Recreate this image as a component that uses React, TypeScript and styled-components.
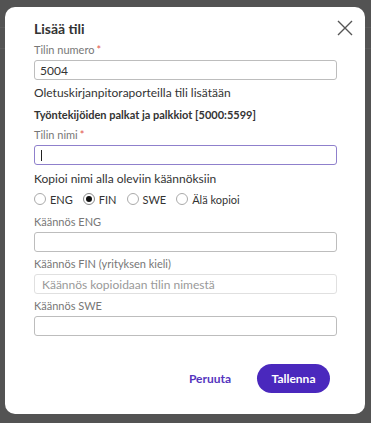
import React from 'react';
import styled, { createGlobalStyle } from 'styled-components';

const GlobalStyle = createGlobalStyle`
  html, body {
    margin: 0;
    padding: 0;
    background: #535353;
    font-family: Lato, "Noto Sans", sans-serif;
  }
`;

const Backdrop = styled.div`
  position: relative;
  width: 371px;
  height: 423px;
  overflow: hidden;
  background: #535353;
`;

const BackRow = styled.div<{ $h: number }>`
  height: ${(p) => p.$h}px;
  border-bottom: 1px solid #5b5b5b;
`;

const Modal = styled.div`
  position: absolute;
  left: 5px;
  top: 7px;
  width: 360px;
  height: 407px;
  box-sizing: border-box;
  background: #fff;
  border-radius: 10px;
  padding: 11px 28px 0 29px;
  display: flex;
  flex-direction: column;
`;

const Header = styled.div`
  display: flex;
  align-items: flex-start;
  justify-content: space-between;
  height: 22px;
`;

const Title = styled.h2`
  margin: 0;
  font-size: 14px;
  line-height: 22px;
  font-weight: 700;
  color: #333;
`;

const CloseButton = styled.button`
  border: 0;
  background: none;
  padding: 0;
  margin-right: -16px;
  margin-top: 2px;
  cursor: pointer;
  display: flex;
`;

const Label = styled.div<{ $top?: number }>`
  font-size: 11px;
  color: #777;
  margin-top: ${(p) => p.$top ?? 5}px;
  line-height: 14px;
`;

const Star = styled.span`
  color: #e2574c;
  margin-left: 2px;
`;

const Field = styled.div`
  position: relative;
  margin-top: 3px;
`;

const Input = styled.input<{ $focused?: boolean }>`
  display: block;
  box-sizing: border-box;
  width: 100%;
  height: 20px;
  padding: 0 5px;
  border: 1px solid ${(p) => (p.$focused ? '#8f80cc' : '#bdbdbd')};
  border-radius: 3px;
  font-family: inherit;
  font-size: 12px;
  color: #333;
  outline: none;
  background: #fff;
  caret-color: transparent;

  &:disabled {
    border-color: #e0e0e0;
    padding-left: 7px;
  }

  &::placeholder {
    color: #999;
  }
`;

const Caret = styled.span`
  position: absolute;
  left: 7px;
  top: 5px;
  width: 1px;
  height: 11px;
  background: #222;
`;

const Text = styled.div<{ $bold?: boolean; $top: number }>`
  font-size: ${(p) => (p.$bold ? 11 : 12)}px;
  line-height: 14px;
  color: #333;
  font-weight: ${(p) => (p.$bold ? 700 : 400)};
  margin-top: ${(p) => p.$top}px;
`;

const RadioRow = styled.div`
  display: flex;
  align-items: center;
  gap: 10px;
  margin-top: 6px;
  height: 14px;
`;

const RadioOption = styled.label`
  display: flex;
  align-items: center;
  gap: 4px;
  font-size: 11px;
  color: #333;
`;

const Circle = styled.span<{ $checked?: boolean }>`
  width: 12px;
  height: 12px;
  box-sizing: border-box;
  border-radius: 50%;
  border: 1px solid ${(p) => (p.$checked ? '#888' : '#aaa')};
  display: flex;
  align-items: center;
  justify-content: center;

  &::after {
    content: '';
    display: ${(p) => (p.$checked ? 'block' : 'none')};
    width: 6px;
    height: 6px;
    border-radius: 50%;
    background: #111;
  }
`;

const Footer = styled.div`
  margin-top: auto;
  margin-bottom: 21px;
  display: flex;
  justify-content: flex-end;
  align-items: center;
  gap: 26px;
  padding-right: 7px;
`;

const TextButton = styled.button`
  border: 0;
  background: none;
  font-family: inherit;
  font-size: 12px;
  font-weight: 700;
  color: #5535be;
  padding: 0;
  cursor: pointer;
`;

const PrimaryButton = styled.button`
  border: 0;
  border-radius: 15px;
  height: 29px;
  width: 73px;
  background: #4a28bd;
  color: #fff;
  font-family: inherit;
  font-size: 12px;
  font-weight: 700;
  cursor: pointer;
`;

const radios = [
  { label: 'ENG', checked: false },
  { label: 'FIN', checked: true },
  { label: 'SWE', checked: false },
  { label: 'Älä kopioi', checked: false },
];

export default function App() {
  return (
    <>
      <GlobalStyle />
      <Backdrop>
        <BackRow $h={27} />
        <BackRow $h={20} />
        <Modal>
          <Header>
            <Title>Lisää tili</Title>
            <CloseButton aria-label="Sulje">
              <svg width="16" height="16" viewBox="0 0 16 16">
                <path d="M1 1L15 15M15 1L1 15" stroke="#555" strokeWidth="1.4" fill="none" />
              </svg>
            </CloseButton>
          </Header>
          <Label $top={3}>
            Tilin numero<Star>*</Star>
          </Label>
          <Field>
            <Input defaultValue="5004" />
          </Field>
          <Text $top={6}>Oletuskirjanpitoraporteilla tili lisätään</Text>
          <Text $bold $top={8}>
            Työntekijöiden palkat ja palkkiot [5000:5599]
          </Text>
          <Label $top={6}>
            Tilin nimi<Star>*</Star>
          </Label>
          <Field>
            <Input $focused />
            <Caret />
          </Field>
          <Text $top={7}>Kopioi nimi alla oleviin käännöksiin</Text>
          <RadioRow>
            {radios.map((r) => (
              <RadioOption key={r.label}>
                <Circle $checked={r.checked} />
                {r.label}
              </RadioOption>
            ))}
          </RadioRow>
          <Label $top={9}>Käännös ENG</Label>
          <Field>
            <Input />
          </Field>
          <Label>Käännös FIN (yrityksen kieli)</Label>
          <Field>
            <Input disabled placeholder="Käännös kopioidaan tilin nimestä" />
          </Field>
          <Label>Käännös SWE</Label>
          <Field>
            <Input />
          </Field>
          <Footer>
            <TextButton>Peruuta</TextButton>
            <PrimaryButton>Tallenna</PrimaryButton>
          </Footer>
        </Modal>
      </Backdrop>
    </>
  );
}
